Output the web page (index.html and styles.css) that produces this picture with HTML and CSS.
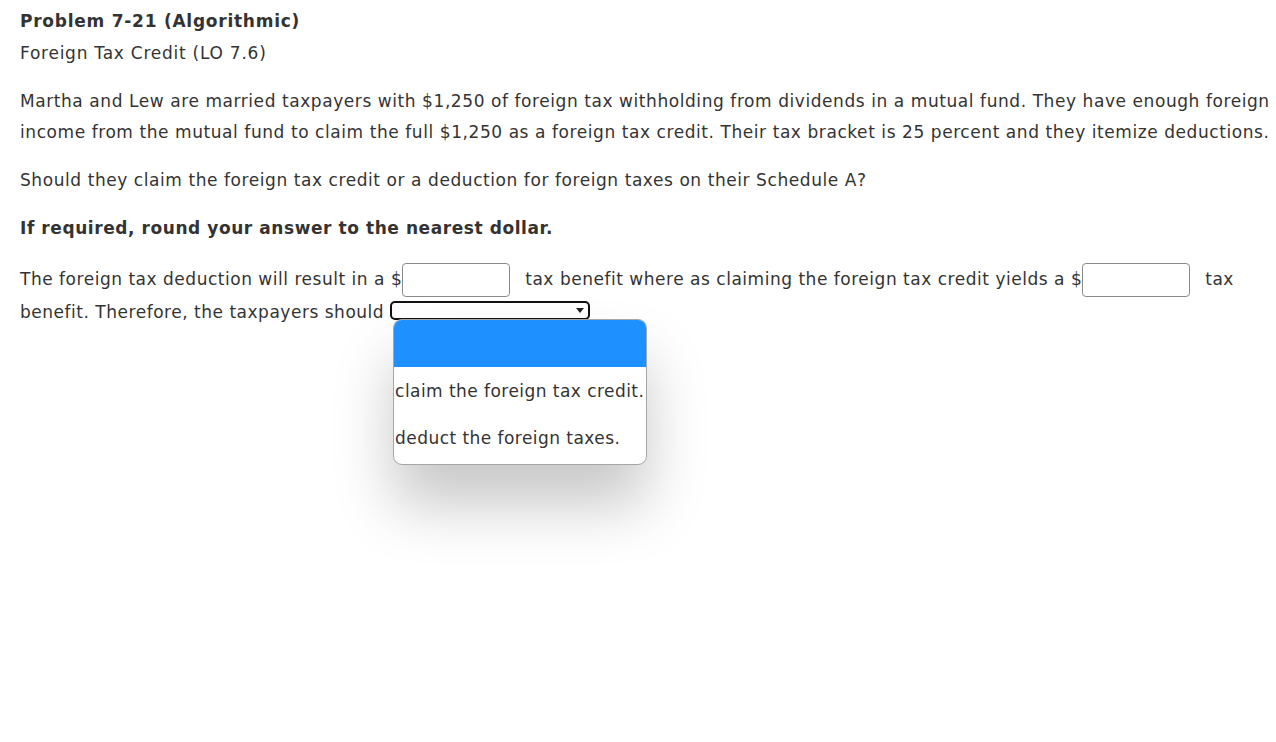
FILE: index.html
```html
<!DOCTYPE html>
<html>
<head>
<meta charset="utf-8">
<link rel="stylesheet" href="styles.css">
</head>
<body>
<div class="page">
  <div class="title">Problem 7-21 (Algorithmic)</div>
  <div class="subtitle">Foreign Tax Credit (LO 7.6)</div>
  <p class="para first">Martha and Lew are married taxpayers with $1,250 of foreign tax withholding from dividends in a mutual fund. They have enough foreign income from the mutual fund to claim the full $1,250 as a foreign tax credit. Their tax bracket is 25 percent and they itemize deductions.</p>
  <p class="para q">Should they claim the foreign tax credit or a deduction for foreign taxes on their Schedule A?</p>
  <p class="para bold">If required, round your answer to the nearest dollar.</p>
  <div class="para answer">The foreign tax deduction will result in a $<span class="input"></span><span class="gap"></span>tax benefit where as claiming the foreign tax credit yields a $<span class="input"></span><span class="gap"></span>tax benefit. Therefore, the taxpayers should <span class="selectwrap"><span class="select"><svg class="arrow" width="8" height="5" viewBox="0 0 8 5"><path d="M0 0H8L4 5Z" fill="#222"/></svg></span><div class="popup"><div class="opt sel"></div><div class="opt">claim the foreign tax credit.</div><div class="opt">deduct the foreign taxes.</div></div></span></div>
</div>
</body>
</html>
```
FILE: styles.css
```css
html, body { margin: 0; padding: 0; background: #fff; min-height: 742px; }
body { font-family: "DejaVu Sans", Verdana, sans-serif; color: #333; font-size: 17px; letter-spacing: 0.57px; }
.page { padding: 8px 4px 0 20px; min-height: 700px; }
.title { font-weight: bold; line-height: 26px; letter-spacing: 0.75px; }
.subtitle { line-height: 26px; margin-top: 6px; letter-spacing: 0.75px; }
.para { margin: 0; line-height: 31px; }
.first { margin-top: 20px; }
.q { margin-top: 17px; }
.bold { font-weight: bold; margin-top: 17px; }
.answer { margin-top: 19px; line-height: 32px; letter-spacing: 0.52px; }
.input { display: inline-block; width: 106px; height: 32px; border: 1px solid #8a8a8a; border-radius: 4px; vertical-align: middle; background: #fff; margin: -1px 0; }
.gap { display: inline-block; width: 15px; }
.selectwrap { position: relative; display: inline-block; vertical-align: middle; margin-bottom: 5px; }
.select { display: block; width: 196px; height: 15px; border: 2px solid #111; border-radius: 5px; position: relative; }
.arrow { position: absolute; right: 4px; top: 5px; }
.popup { position: absolute; left: 3px; top: 18px; width: 252px; background: #fff; border: 1px solid #a6a6a6; border-radius: 9px; box-shadow: 0 40px 60px rgba(0,0,0,0.22); z-index: 5; }
.opt { height: 48px; line-height: 48px; padding-left: 1px; white-space: nowrap; color: #333; letter-spacing: 0.45px; }
.opt.sel { background: #1e90ff; height: 47px; border-radius: 8px 8px 0 0; }
.opt:last-child { height: 49px; line-height: 46px; }
```
